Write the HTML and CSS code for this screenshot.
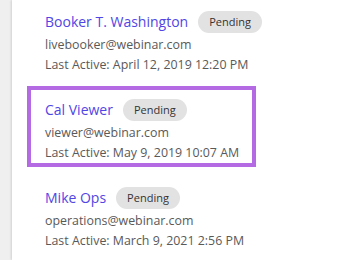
FILE: index.html
```html
<!DOCTYPE html>
<html>
<head>
<meta charset="utf-8">
<link rel="stylesheet" href="styles.css">
</head>
<body>
<div class="panel">
  <ul class="list">
    <li class="item">
      <div class="name-row"><span class="name">Booker T. Washington</span><span class="pill">Pending</span></div>
      <div class="line">livebooker@webinar.com</div>
      <div class="line">Last Active: April 12, 2019 12:20 PM</div>
    </li>
    <li class="item selected">
      <div class="name-row"><span class="name">Cal Viewer</span><span class="pill">Pending</span></div>
      <div class="line">viewer@webinar.com</div>
      <div class="line">Last Active: May 9, 2019 10:07 AM</div>
    </li>
    <li class="item">
      <div class="name-row"><span class="name">Mike Ops</span><span class="pill">Pending</span></div>
      <div class="line">operations@webinar.com</div>
      <div class="line">Last Active: March 9, 2021 2:56 PM</div>
    </li>
  </ul>
</div>
</body>
</html>
```
FILE: styles.css
```css
html, body {
  margin: 0;
  padding: 0;
  height: 100%;
  background: #efefef;
  font-family: "Open Sans", "Liberation Sans", sans-serif;
  overflow: hidden;
}
.panel {
  margin-left: 12px;
  height: 100%;
  background: #ffffff;
  box-shadow: -1px 0 2px rgba(0, 0, 0, 0.12);
}
.list {
  list-style: none;
  margin: 0;
  padding: 0 0 0 15px;
  display: flex;
  flex-direction: column;
  gap: 7px;
  position: relative;
  top: -2px;
}
.item {
  box-sizing: border-box;
  width: 229px;
  height: 81px;
  border: 4px solid transparent;
  padding: 6px 0 1px 14px;
}
.item.selected {
  border-color: #b36ae2;
}
.name-row {
  height: 27px;
  display: flex;
  align-items: center;
  gap: 10px;
}
.name {
  font-size: 14px;
  color: #5046e5;
  white-space: nowrap;
}
.pill {
  background: #e2e2e2;
  border-radius: 11px;
  height: 22px;
  padding: 0 11px;
  display: flex;
  align-items: center;
  font-size: 11px;
  color: #333;
}
.line {
  font-size: 12.4px;
  line-height: 20px;
  color: #595959;
  white-space: nowrap;
}
```
